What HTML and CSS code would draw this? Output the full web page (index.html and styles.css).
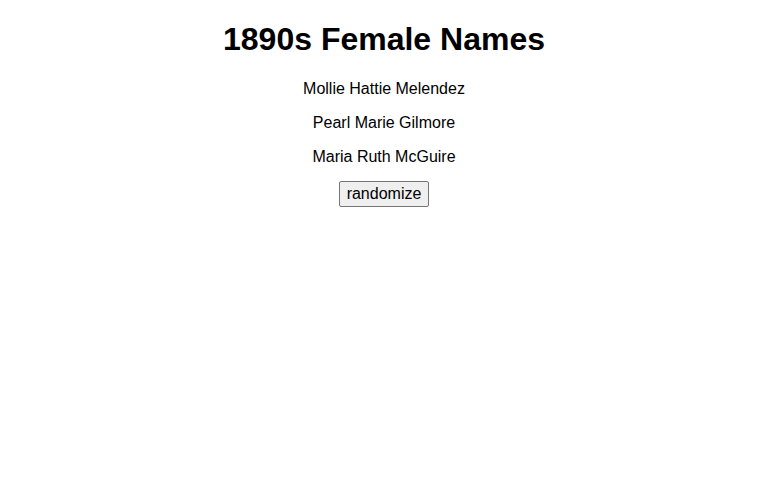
FILE: index.html
```html
<!DOCTYPE html>
<html lang="en">
<head>
  <meta charset="UTF-8">
  <title>1890s Female Names</title>
  <link rel="stylesheet" href="styles.css">
</head>
<body>

  <div class="app">
    <h1>1890s Female Names</h1>
    <div id="names">
      <p class="name">Mollie Hattie Melendez</p>
      <p class="name">Pearl Marie Gilmore</p>
      <p class="name">Maria Ruth McGuire</p>
    </div>
    <button id="randomize">randomize</button>
  </div>

</body>
</html>
```

FILE: styles.css
```css
body {
  font-family: "Liberation Sans", Arial, sans-serif;
  margin: 0 8px;
  background-color: #fff;
  color: #000;
}
.app {
  text-align: center;
  padding-top: 1px;
}
h1 {
  font-size: 32px;
  margin: 20px 0 22px;
}
.name {
  font-size: 16px;
  margin: 16px 0;
}
#names {
  margin-bottom: 15px;
}
#names .name:last-child {
  margin-bottom: 15px;
}
button {
  font-family: "Liberation Sans", Arial, sans-serif;
  font-size: 16px;
  padding: 3px 7px;
  border: 1px solid #767676;
  border-radius: 2px;
  background-color: #efefef;
  color: #000;
}
```
